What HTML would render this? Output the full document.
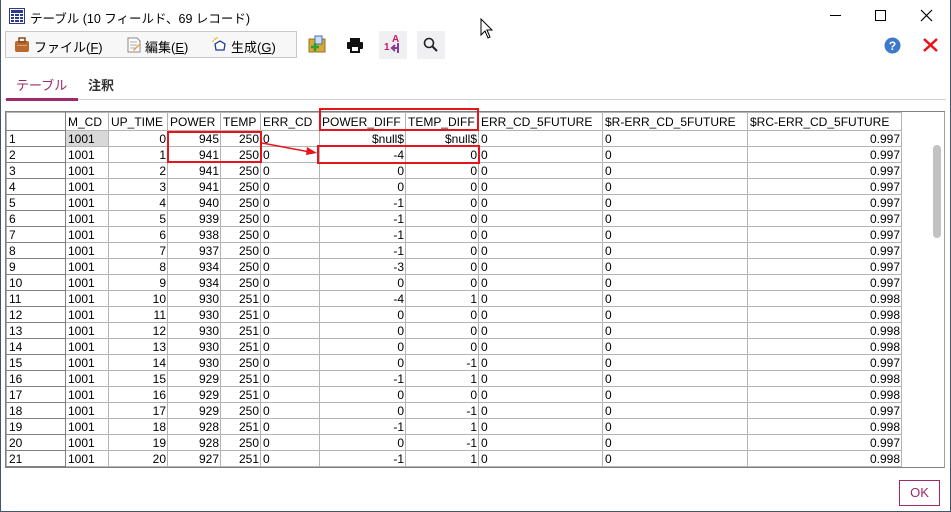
<!DOCTYPE html>
<html><head><meta charset="utf-8"><style>
*{margin:0;padding:0;box-sizing:border-box}
body{width:951px;height:512px;background:#fff;position:relative;overflow:hidden;font-family:"Liberation Sans","Noto Sans CJK JP",sans-serif;color:#000}
.win{position:absolute;left:0;top:0;width:951px;height:512px;border:1px solid #44546a;border-top:none}
.abs{position:absolute}
table{position:absolute;left:6px;top:112px;width:895px;border-collapse:collapse;font-size:12px;table-layout:fixed}
td{border:1px solid #b4b4b4;height:16px;line-height:14px;padding:0 1px 0 2px;white-space:nowrap;overflow:hidden}
tr.h td{height:18px;line-height:16px;padding:0 2px}
td.r{text-align:right}
td.rh{border-right:1px solid #808080;border-bottom:1px solid #808080}
.red{position:absolute;border:2px solid #e8141c}
</style></head><body>
<div class="win"></div>
<svg class="abs" style="left:9px;top:8px" width="16" height="16"><rect x="0.5" y="0.5" width="15" height="15" fill="#fff" stroke="#2b3a8a"/><rect x="2" y="2" width="12" height="3" fill="#2b3a8a"/><g fill="#2b3a8a"><rect x="2" y="6" width="3" height="2"/><rect x="6" y="6" width="4" height="2"/><rect x="11" y="6" width="3" height="2"/><rect x="2" y="9" width="3" height="2"/><rect x="6" y="9" width="4" height="2"/><rect x="11" y="9" width="3" height="2"/><rect x="2" y="12" width="3" height="2"/><rect x="6" y="12" width="4" height="2"/><rect x="11" y="12" width="3" height="2"/></g></svg>
<div class="abs" style="left:30px;top:8px;font-size:12.5px">テーブル (10 フィールド、69 レコード)</div>
<svg class="abs" style="left:480px;top:18px" width="14" height="22"><path d="M1 1 L1 17 L5 13 L8 20 L10 19 L7 12 L12 12 Z" fill="#fff" stroke="#000"/></svg>
<div class="abs" style="left:830px;top:15px;width:11px;height:1px;background:#000"></div>
<div class="abs" style="left:875px;top:10px;width:11px;height:11px;border:1px solid #000"></div>
<svg class="abs" style="left:920px;top:9px" width="13" height="13"><path d="M1 1L12 12M12 1L1 12" stroke="#000" stroke-width="1.2"/></svg>
<div class="abs" style="left:5px;top:31px;width:292px;height:27px;border:1px solid #c8c8c8;background:#f7f7f7"></div>
<svg class="abs" style="left:14px;top:37px" width="16" height="16"><rect x="1" y="4" width="14" height="11" rx="2" fill="#b86a30"/><rect x="5" y="1" width="6" height="4" fill="none" stroke="#8a4a1a" stroke-width="1.5"/><rect x="3" y="8" width="10" height="1" fill="#e6a060"/></svg>
<div class="abs" style="left:34px;top:37px;font-size:13px">ファイル(<u>F</u>)</div>
<svg class="abs" style="left:126px;top:37px" width="16" height="16"><path d="M2 1h9l3 3v11H2z" fill="#fff" stroke="#888"/><path d="M4 5h7M4 8h7M4 11h5" stroke="#aaa"/><path d="M7 13l7-7 1 1-7 7z" fill="#e8a040"/></svg>
<div class="abs" style="left:145px;top:37px;font-size:13px">編集(<u>E</u>)</div>
<svg class="abs" style="left:212px;top:37px" width="16" height="16"><path d="M3 7l5-3 5 3-1 6H4z" fill="#fff" stroke="#223a8a" stroke-width="1.3"/><path d="M2 1l2 2M5 0v2M0 4h2" stroke="#e0b000"/></svg>
<div class="abs" style="left:231px;top:37px;font-size:13px">生成(<u>G</u>)</div>
<svg class="abs" style="left:308px;top:35px" width="18" height="18"><rect x="1" y="4" width="16" height="13" fill="#d6a838" stroke="#9a7020"/><rect x="7" y="1" width="7" height="8" fill="#cfe0f6" stroke="#3a70b8"/><path d="M3 12h8M7 8v8" stroke="#2aa030" stroke-width="2.5"/></svg>
<svg class="abs" style="left:346px;top:37px" width="18" height="16"><path d="M4 1h10v4H4z" fill="#111"/><rect x="1" y="5" width="16" height="7" rx="1" fill="#111"/><rect x="5" y="9" width="8" height="6" fill="#fff" stroke="#111" stroke-width="2"/></svg>
<div class="abs" style="left:379px;top:31px;width:28px;height:28px;background:#f0f0f2"></div>
<div class="abs" style="left:384px;top:35px;color:#d0186a;font-size:10px;font-weight:bold;line-height:10px"><span style="position:absolute;left:8px;top:0">A</span><span style="position:absolute;left:0;top:8px">1</span></div>
<svg class="abs" style="left:390px;top:40px" width="14" height="14"><path d="M1 8h7M5 5l-3 3 3 3M8 3v10" stroke="#8a3a9a" stroke-width="2" fill="none"/></svg>
<div class="abs" style="left:417px;top:31px;width:28px;height:28px;background:#f0f0f2"></div>
<svg class="abs" style="left:423px;top:37px" width="16" height="16"><circle cx="6" cy="6" r="4.5" fill="none" stroke="#222" stroke-width="1.6"/><path d="M9.5 9.5L14 14" stroke="#222" stroke-width="2"/></svg>
<svg class="abs" style="left:884px;top:37px" width="17" height="17"><circle cx="8.5" cy="8.5" r="8" fill="#3e78c8"/><text x="8.5" y="13" font-size="12" font-weight="bold" fill="#fff" text-anchor="middle" font-family="Liberation Sans">?</text></svg>
<svg class="abs" style="left:923px;top:38px" width="15" height="14"><path d="M1 1L14 13M14 1L1 13" stroke="#ee1010" stroke-width="2.5"/></svg>
<div class="abs" style="left:16px;top:75px;font-size:13px;color:#a02868">テーブル</div>
<div class="abs" style="left:88px;top:75px;font-size:13px;font-weight:bold;color:#333">注釈</div>
<div class="abs" style="left:5px;top:99px;width:941px;height:1px;background:#d0d0d0"></div>
<div class="abs" style="left:6px;top:98px;width:72px;height:3px;background:#a02868"></div>
<div class="abs" style="left:5px;top:111px;width:940px;height:357px;border:1px solid #808080;border-right:1px solid #a0a0a0"></div>
<div class="abs" style="left:933px;top:145px;width:8px;height:93px;background:#c2c2c2;border-radius:4px"></div>
<table>
<colgroup><col style="width:59px"><col style="width:43px"><col style="width:59px"><col style="width:53px"><col style="width:40px"><col style="width:59px"><col style="width:86px"><col style="width:73px"><col style="width:124px"><col style="width:145px"><col style="width:154px"></colgroup>
<tr class="h"><td class="rh"></td><td>M_CD</td><td>UP_TIME</td><td>POWER</td><td>TEMP</td><td>ERR_CD</td><td>POWER_DIFF</td><td>TEMP_DIFF</td><td>ERR_CD_5FUTURE</td><td>$R-ERR_CD_5FUTURE</td><td>$RC-ERR_CD_5FUTURE</td></tr>
<tr><td class="rh">1</td><td style="background:#d8d8d8">1001</td><td class="r">0</td><td class="r">945</td><td class="r">250</td><td>0</td><td class="r">$null$</td><td class="r">$null$</td><td>0</td><td>0</td><td class="r">0.997</td></tr>
<tr><td class="rh">2</td><td>1001</td><td class="r">1</td><td class="r">941</td><td class="r">250</td><td>0</td><td class="r">-4</td><td class="r">0</td><td>0</td><td>0</td><td class="r">0.997</td></tr>
<tr><td class="rh">3</td><td>1001</td><td class="r">2</td><td class="r">941</td><td class="r">250</td><td>0</td><td class="r">0</td><td class="r">0</td><td>0</td><td>0</td><td class="r">0.997</td></tr>
<tr><td class="rh">4</td><td>1001</td><td class="r">3</td><td class="r">941</td><td class="r">250</td><td>0</td><td class="r">0</td><td class="r">0</td><td>0</td><td>0</td><td class="r">0.997</td></tr>
<tr><td class="rh">5</td><td>1001</td><td class="r">4</td><td class="r">940</td><td class="r">250</td><td>0</td><td class="r">-1</td><td class="r">0</td><td>0</td><td>0</td><td class="r">0.997</td></tr>
<tr><td class="rh">6</td><td>1001</td><td class="r">5</td><td class="r">939</td><td class="r">250</td><td>0</td><td class="r">-1</td><td class="r">0</td><td>0</td><td>0</td><td class="r">0.997</td></tr>
<tr><td class="rh">7</td><td>1001</td><td class="r">6</td><td class="r">938</td><td class="r">250</td><td>0</td><td class="r">-1</td><td class="r">0</td><td>0</td><td>0</td><td class="r">0.997</td></tr>
<tr><td class="rh">8</td><td>1001</td><td class="r">7</td><td class="r">937</td><td class="r">250</td><td>0</td><td class="r">-1</td><td class="r">0</td><td>0</td><td>0</td><td class="r">0.997</td></tr>
<tr><td class="rh">9</td><td>1001</td><td class="r">8</td><td class="r">934</td><td class="r">250</td><td>0</td><td class="r">-3</td><td class="r">0</td><td>0</td><td>0</td><td class="r">0.997</td></tr>
<tr><td class="rh">10</td><td>1001</td><td class="r">9</td><td class="r">934</td><td class="r">250</td><td>0</td><td class="r">0</td><td class="r">0</td><td>0</td><td>0</td><td class="r">0.997</td></tr>
<tr><td class="rh">11</td><td>1001</td><td class="r">10</td><td class="r">930</td><td class="r">251</td><td>0</td><td class="r">-4</td><td class="r">1</td><td>0</td><td>0</td><td class="r">0.998</td></tr>
<tr><td class="rh">12</td><td>1001</td><td class="r">11</td><td class="r">930</td><td class="r">251</td><td>0</td><td class="r">0</td><td class="r">0</td><td>0</td><td>0</td><td class="r">0.998</td></tr>
<tr><td class="rh">13</td><td>1001</td><td class="r">12</td><td class="r">930</td><td class="r">251</td><td>0</td><td class="r">0</td><td class="r">0</td><td>0</td><td>0</td><td class="r">0.998</td></tr>
<tr><td class="rh">14</td><td>1001</td><td class="r">13</td><td class="r">930</td><td class="r">251</td><td>0</td><td class="r">0</td><td class="r">0</td><td>0</td><td>0</td><td class="r">0.998</td></tr>
<tr><td class="rh">15</td><td>1001</td><td class="r">14</td><td class="r">930</td><td class="r">250</td><td>0</td><td class="r">0</td><td class="r">-1</td><td>0</td><td>0</td><td class="r">0.997</td></tr>
<tr><td class="rh">16</td><td>1001</td><td class="r">15</td><td class="r">929</td><td class="r">251</td><td>0</td><td class="r">-1</td><td class="r">1</td><td>0</td><td>0</td><td class="r">0.998</td></tr>
<tr><td class="rh">17</td><td>1001</td><td class="r">16</td><td class="r">929</td><td class="r">251</td><td>0</td><td class="r">0</td><td class="r">0</td><td>0</td><td>0</td><td class="r">0.998</td></tr>
<tr><td class="rh">18</td><td>1001</td><td class="r">17</td><td class="r">929</td><td class="r">250</td><td>0</td><td class="r">0</td><td class="r">-1</td><td>0</td><td>0</td><td class="r">0.997</td></tr>
<tr><td class="rh">19</td><td>1001</td><td class="r">18</td><td class="r">928</td><td class="r">251</td><td>0</td><td class="r">-1</td><td class="r">1</td><td>0</td><td>0</td><td class="r">0.998</td></tr>
<tr><td class="rh">20</td><td>1001</td><td class="r">19</td><td class="r">928</td><td class="r">250</td><td>0</td><td class="r">0</td><td class="r">-1</td><td>0</td><td>0</td><td class="r">0.997</td></tr>
<tr><td class="rh">21</td><td>1001</td><td class="r">20</td><td class="r">927</td><td class="r">251</td><td>0</td><td class="r">-1</td><td class="r">1</td><td>0</td><td>0</td><td class="r">0.998</td></tr>
</table>
<div class="red" style="left:319px;top:108px;width:160px;height:23px"></div>
<div class="red" style="left:167px;top:131px;width:95px;height:32px"></div>
<div class="red" style="left:317px;top:145px;width:163px;height:19px"></div>
<svg class="abs" style="left:260px;top:138px" width="60" height="20"><path d="M2 5L50 14" stroke="#e8141c" stroke-width="1.5"/><path d="M57 15L47 9L46 17Z" fill="#e8141c"/></svg>
<div class="abs" style="left:899px;top:480px;width:41px;height:26px;border:1px solid #a02868;color:#a02868;font-size:13px;text-align:center;line-height:24px">OK</div>
</body></html>
